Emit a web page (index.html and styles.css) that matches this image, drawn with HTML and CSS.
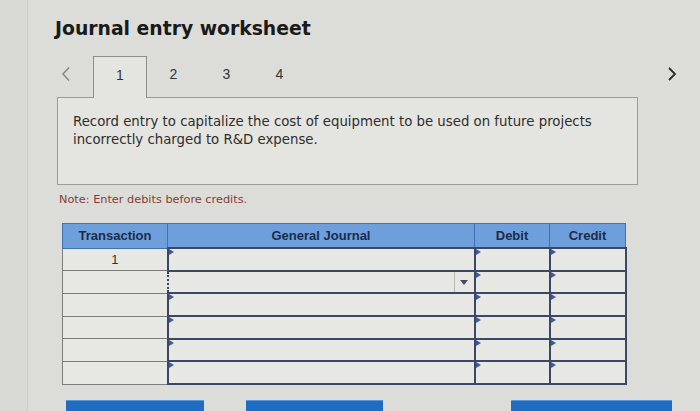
FILE: index.html
```html
<!DOCTYPE html>
<html lang="en">
<head>
<meta charset="utf-8">
<title>Journal entry worksheet</title>
<link rel="stylesheet" href="styles.css">
</head>
<body>
<div class="screen">
  <div class="page">
    <h1 class="title">Journal entry worksheet</h1>
    <div class="tabs">
      <span class="chev chev-left">
        <svg width="12" height="16" viewBox="0 0 12 16"><path d="M9 1.5 L3 8 L9 14.5" fill="none" stroke="#8a8a8a" stroke-width="1.6"/></svg>
      </span>
      <span class="tab active">1</span>
      <span class="tab">2</span>
      <span class="tab">3</span>
      <span class="tab">4</span>
      <span class="chev chev-right">
        <svg width="12" height="16" viewBox="0 0 12 16"><path d="M3 2 L9 8 L3 14" fill="none" stroke="#2a2a2a" stroke-width="1.8"/></svg>
      </span>
    </div>
    <div class="prompt">
      <p>Record entry to capitalize the cost of equipment to be used on future projects incorrectly charged to R&amp;D expense.</p>
    </div>
    <p class="note">Note: Enter debits before credits.</p>
    <table class="journal">
      <colgroup>
        <col class="c-trans"><col class="c-gj"><col class="c-dr"><col class="c-cr">
      </colgroup>
      <thead>
        <tr><th>Transaction</th><th>General Journal</th><th>Debit</th><th>Credit</th></tr>
      </thead>
      <tbody>
        <tr><td class="trans">1</td><td class="inp"></td><td class="inp"></td><td class="inp"></td></tr>
        <tr><td class="trans"></td><td class="inp focus"><span class="dd"></span></td><td class="inp"></td><td class="inp"></td></tr>
        <tr><td class="trans"></td><td class="inp"></td><td class="inp"></td><td class="inp"></td></tr>
        <tr><td class="trans"></td><td class="inp"></td><td class="inp"></td><td class="inp"></td></tr>
        <tr><td class="trans"></td><td class="inp"></td><td class="inp"></td><td class="inp"></td></tr>
        <tr><td class="trans"></td><td class="inp"></td><td class="inp"></td><td class="inp"></td></tr>
      </tbody>
    </table>
    <div class="buttons">
      <span class="btn b1"></span>
      <span class="btn b2"></span>
      <span class="btn b3"></span>
    </div>
  </div>
</div>
</body>
</html>
```
FILE: styles.css
```css
html, body {
  margin: 0;
  padding: 0;
  background: #d9d9d5;
  overflow: hidden;
}
.screen {
  width: 673px;
  height: 411px;
  box-sizing: border-box;
  border-left: 1px solid #c9c9c5;
  margin-left: 27px;
  background: #dcdcd8;
  overflow: hidden;
}
.page {
  padding: 16px 0 0 27px;
  font-family: "DejaVu Sans", Verdana, sans-serif;
  color: #333;
}
.title {
  margin: 0;
  font-size: 18.8px;
  line-height: 26px;
  font-weight: bold;
  color: #1a1a1a;
}
.tabs {
  display: flex;
  align-items: stretch;
  height: 41px;
  margin-top: 14px;
  width: 623px;
  position: relative;
  z-index: 1;
}
.chev {
  display: flex;
  align-items: center;
  height: 36px;
}
.chev-left {
  width: 38px;
  padding-left: 5px;
  box-sizing: border-box;
}
.chev-right {
  margin-left: auto;
}
.tab {
  width: 53px;
  text-align: center;
  font-family: "Liberation Sans", Arial, sans-serif;
  font-size: 14px;
  line-height: 36px;
  color: #333;
}
.tab.active {
  box-sizing: border-box;
  width: 54px;
  border: 1px solid #8e8e8e;
  border-bottom: none;
  background: #e4e4e0;
  margin-bottom: -1px;
  height: 42px;
}
.prompt {
  margin-left: 2px;
  width: 581px;
  height: 88px;
  box-sizing: border-box;
  border: 1px solid #9c9c9a;
  background: #e4e4e0;
  padding: 15px 15px 0 15px;
}
.prompt p {
  margin: 0;
  font-size: 13.3px;
  line-height: 18px;
  color: #2e2e2e;
}
.note {
  margin: 7px 0 0 4px;
  font-size: 11.3px;
  line-height: 16px;
  color: #8a3a36;
}
.journal {
  margin: 15px 0 0 7px;
  border-collapse: collapse;
  table-layout: fixed;
  width: 563px;
  font-family: "Liberation Sans", Arial, sans-serif;
}
.c-trans { width: 105px; }
.c-gj { width: 307px; }
.c-dr { width: 75px; }
.c-cr { width: 76px; }
.journal th {
  height: 23px;
  padding: 0;
  background: #6e9fdb;
  border: 1px solid #3f72b6;
  color: #1c2b4b;
  font-size: 13px;
  font-weight: bold;
  text-align: center;
}
.journal td {
  height: 20.7px;
  padding: 0;
  background: #e7e7e3;
  font-size: 13px;
  color: #333;
}
.journal td.trans {
  border: 1px solid #7c7c7c;
  text-align: center;
}
.journal td.inp {
  position: relative;
  border: 2px solid #3c4766;
}
.journal td.inp::before {
  content: "";
  position: absolute;
  left: 0;
  top: 0;
  border-left: 5px solid #3b5aa0;
  border-top: 3px solid transparent;
  border-bottom: 3px solid transparent;
}
.journal td.focus {
  border: 2px dotted #3c4766;
}
.journal td.focus::before {
  display: none;
}
.dd {
  position: absolute;
  right: 0;
  top: 0;
  bottom: 0;
  width: 19px;
  border-left: 1px solid #b9b9b5;
}
.dd::after {
  content: "";
  position: absolute;
  left: 5px;
  top: 8px;
  border-top: 5px solid #444a5e;
  border-left: 4px solid transparent;
  border-right: 4px solid transparent;
}
.buttons {
  display: flex;
  margin-top: 15px;
  margin-left: 11px;
  height: 20px;
}
.btn {
  display: block;
  height: 20px;
  background: #1f6cc0;
  border-top: 1px solid #5d94d2;
}
.b1 { width: 138px; }
.b2 { width: 137px; margin-left: 42px; }
.b3 { width: 161px; margin-left: 128px; }
```
